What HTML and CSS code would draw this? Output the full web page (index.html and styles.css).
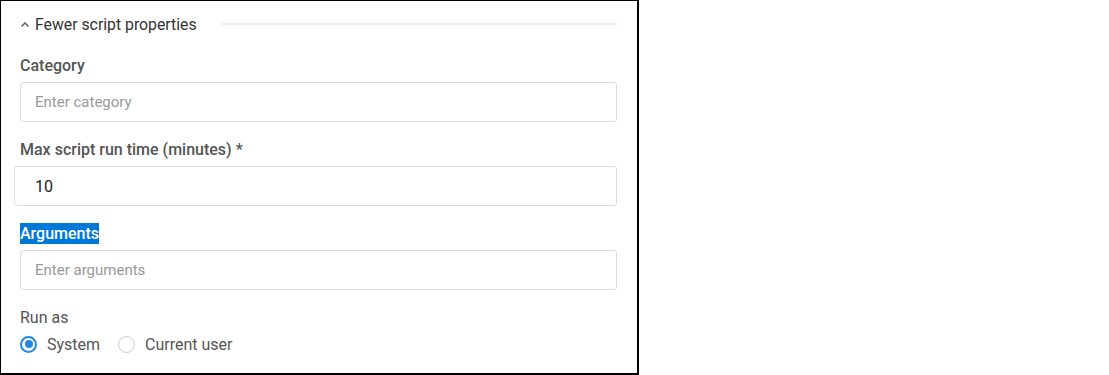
FILE: index.html
```html
<!DOCTYPE html>
<html>
<head>
<meta charset="utf-8">
<link rel="stylesheet" href="styles.css">
</head>
<body>
<div class="panel">
  <div class="section-head">
    <svg class="chev" width="10" height="7" viewBox="0 0 10 7"><path d="M1.5 5.5 L5 2 L8.5 5.5" fill="none" stroke="#555" stroke-width="1.4"/></svg>
    <span class="section-title">Fewer script properties</span>
    <span class="divider"></span>
  </div>

  <div class="field">
    <div class="label">Category</div>
    <div class="input placeholder">Enter category</div>
  </div>

  <div class="field">
    <div class="label">Max script run time (minutes) *</div>
    <div class="input shifted value">10</div>
  </div>

  <div class="field">
    <div class="label"><span class="selected">Arguments</span></div>
    <div class="input placeholder">Enter arguments</div>
  </div>

  <div class="field last">
    <div class="label plain">Run as</div>
    <div class="radios">
      <label class="radio"><span class="dot on"></span>System</label>
      <label class="radio"><span class="dot"></span>Current user</label>
    </div>
  </div>
</div>
</body>
</html>
```

FILE: styles.css
```css
html, body {
  margin: 0;
  padding: 0;
  background: #fff;
}

body {
  font-family: Roboto, "Liberation Sans", Arial, sans-serif;
}

.panel {
  box-sizing: border-box;
  width: 639px;
  height: 375px;
  border: 1px solid #000;
  border-right-width: 2px;
  border-bottom-width: 2px;
  padding: 13px 20px 0 19px;
}

.section-head {
  display: flex;
  align-items: center;
  height: 20px;
  margin-bottom: 22px;
}

.chev {
  margin-right: 5px;
  margin-top: 1px;
}

.section-title {
  font-size: 15.8px;
  color: #333;
}

.divider {
  flex: 1;
  height: 2px;
  background: #f0f0f0;
  margin-left: 24px;
}

.field {
  display: flex;
  flex-direction: column;
  margin-bottom: 18px;
}

.field.last {
  margin-bottom: 0;
  margin-top: 2px;
}

.label {
  font-size: 16px;
  font-weight: 500;
  color: #555;
  line-height: 20px;
  height: 20px;
  margin-bottom: 6px;
}

.label.plain {
  font-weight: 400;
}

.selected {
  background: #0078d7;
  color: #fff;
  padding: 1px 0 1px;
}

.input {
  box-sizing: border-box;
  height: 40px;
  border: 1px solid #ddd;
  border-radius: 3px;
  padding: 0 14px;
  display: flex;
  align-items: center;
  font-size: 15px;
}

.input.placeholder {
  color: #999;
}

.input.value {
  color: #222;
  font-size: 16px;
}

.input.shifted {
  margin-left: -6px;
  padding-left: 20px;
}

.radios {
  display: flex;
  align-items: center;
  gap: 18px;
  height: 20px;
}

.radio {
  display: flex;
  align-items: center;
  font-size: 16px;
  color: #555;
}

.dot {
  box-sizing: border-box;
  width: 17px;
  height: 17px;
  border-radius: 50%;
  border: 1px solid #ccc;
  margin-right: 10px;
  background: #fff;
  position: relative;
}

.dot.on {
  border: 2px solid #1e88e5;
}

.dot.on::after {
  content: "";
  position: absolute;
  left: 2.5px;
  top: 2.5px;
  width: 8px;
  height: 8px;
  border-radius: 50%;
  background: #1e88e5;
}
```
